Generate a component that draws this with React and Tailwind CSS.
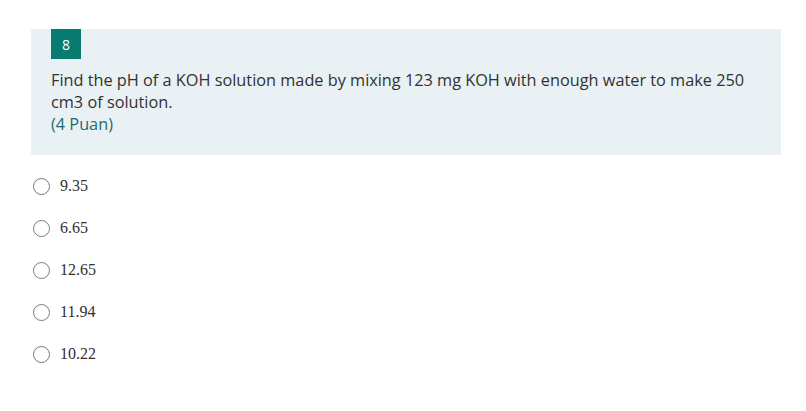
import React from "react";

const options = ["9.35", "6.65", "12.65", "11.94", "10.22"];

export default function App() {
  return (
    <div className="w-[806px] h-[411px] bg-white pt-[29px] pl-[31px] pr-[25px]">
      <div className="bg-[#e9f1f4] h-[126px] pl-[20px] pr-[20px]">
        <div className="w-[30px] h-[30px] bg-[#077b6f] text-white flex items-center justify-center text-[14px] font-['Open_Sans',sans-serif]">
          8
        </div>
        <div className="mt-[10px] text-[16.3px] leading-[22px] text-[#323130] font-['Open_Sans',sans-serif]">
          Find the pH of a KOH solution made by mixing 123 mg KOH with enough water to make 250 cm3 of solution.
        </div>
        <div className="text-[16.3px] leading-[22px] text-[#1f6b6d] font-['Open_Sans',sans-serif]">
          (4 Puan)
        </div>
      </div>
      <div className="flex flex-col pt-[10px] pl-[2px]">
        {options.map((o) => (
          <div key={o} className="h-[42px] flex items-center">
            <span className="w-[17px] h-[17px] rounded-full border border-[#7a7a7a] bg-white" />
            <span className="ml-[10px] text-[16px] text-[#323130] font-['Liberation_Serif',serif]">{o}</span>
          </div>
        ))}
      </div>
    </div>
  );
}
